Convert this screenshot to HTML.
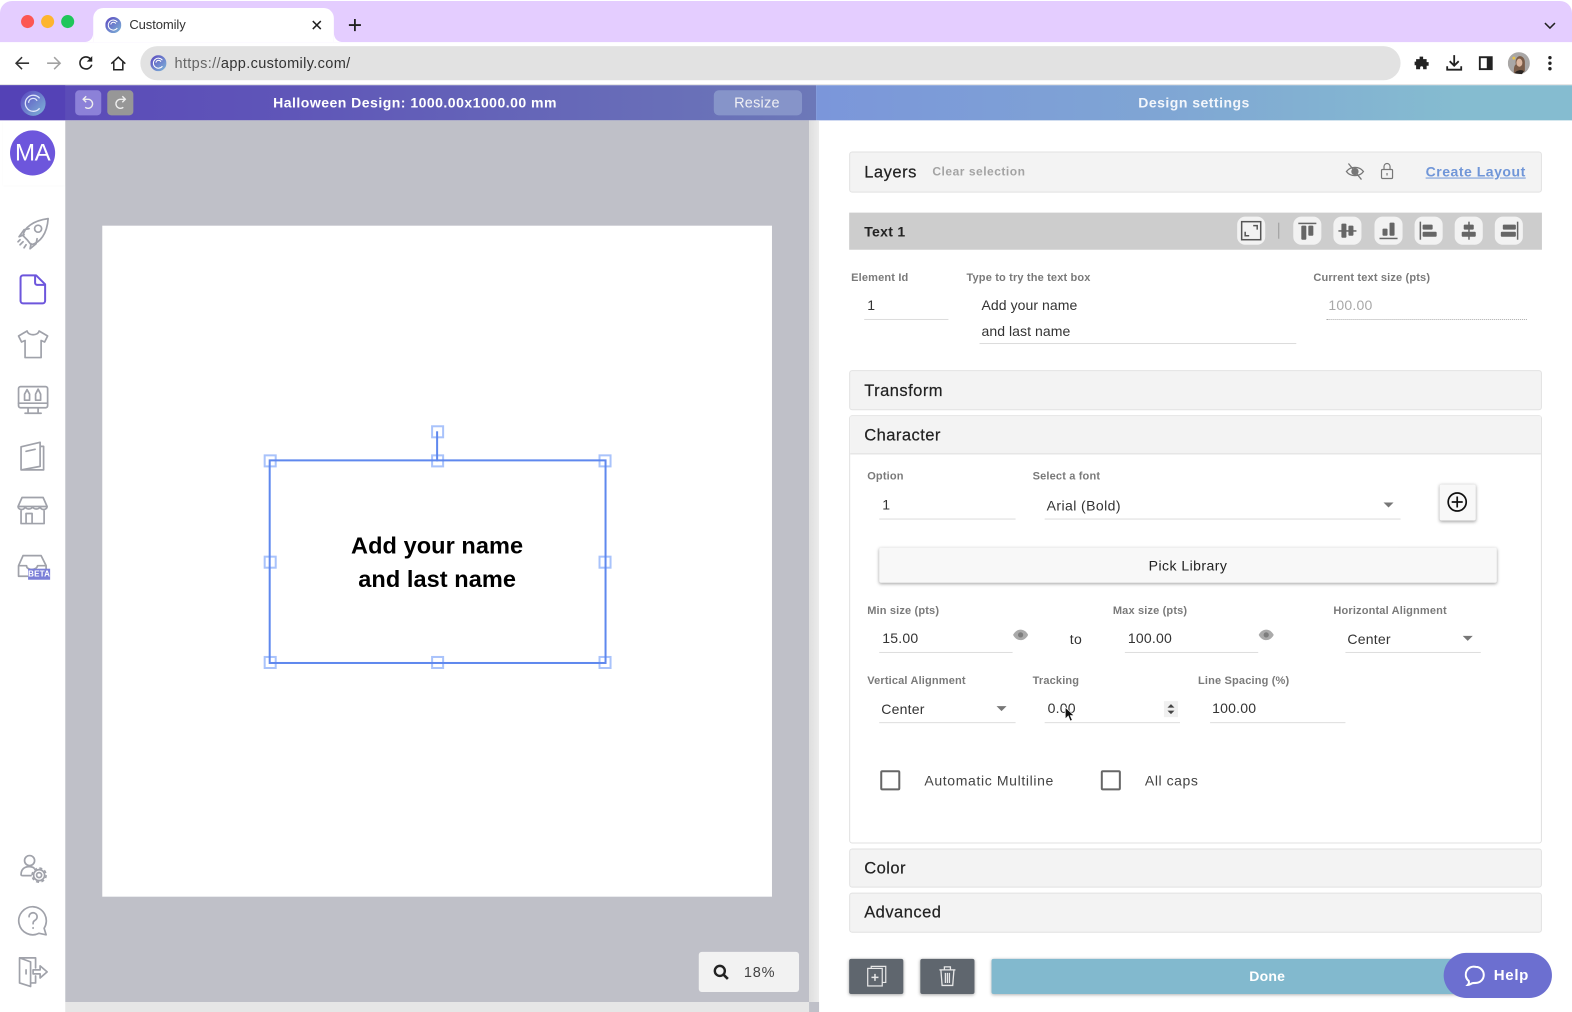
<!DOCTYPE html>
<html lang="en"><head><meta charset="utf-8"><title>Customily</title>
<style>
html,body{margin:0;padding:0;width:1572px;height:1012px;overflow:hidden;background:#fff}
#w{position:absolute;left:0;top:0;width:1568px;height:1009px;transform-origin:0 0;transform:scale(1.00255,1.003);font-family:"Liberation Sans",sans-serif;overflow:hidden;color:#333}
#w div,#w svg{position:absolute}
.t{position:absolute;white-space:nowrap;line-height:20px;font-size:14px;letter-spacing:.2px;color:#333}
.l{position:absolute;white-space:nowrap;line-height:14px;font-size:11px;font-weight:bold;letter-spacing:.15px;color:#7a7a7a;margin-top:1px}
.u{height:1px;background:#dcdcdc}
.s{left:847px;width:689px;background:#f3f3f3;border:1px solid #e2e2e2;border-radius:3px}
.h{position:absolute;white-space:nowrap;left:862px;font-size:16.5px;line-height:20px;letter-spacing:.45px;color:#222;margin-top:1px;-webkit-text-stroke:.2px #222}
.b{width:28px;height:28px;top:216px;background:#f2f2f2;border-radius:8px}
.g{fill:none;stroke:#a0a2aa;stroke-width:1.700;stroke-linejoin:round;stroke-linecap:round}
.hd{width:9px;height:9px;border:2px solid #a9c3fb}
.c{width:0;height:0;border-left:5px solid transparent;border-right:5px solid transparent;border-top:5px solid #777}
</style></head><body><div id="w">
<!-- tab strip -->
<div style="left:0;top:1px;width:1568px;height:41px;background:#e4cdff;border-radius:12px 12px 0 0"></div>
<div style="left:21px;top:15px;width:13px;height:13px;border-radius:50%;background:#fc5753"></div>
<div style="left:41px;top:15px;width:13px;height:13px;border-radius:50%;background:#fdb52e"></div>
<div style="left:61px;top:15px;width:13px;height:13px;border-radius:50%;background:#1fc65a"></div>
<div style="left:93px;top:8px;width:240px;height:34px;background:#fff;border-radius:10px 10px 0 0"></div>
<svg style="left:83px;top:32px" width="260" height="10"><path d="M0 10h10V0C10 7 6 10 0 10zM260 10h-10V0c0 7 4 10 10 10z" fill="#fff"/></svg>
<svg style="left:105px;top:17px" width="16" height="16" viewBox="0 0 16 16"><defs><linearGradient id="f" x1="0" y1="0" x2="1" y2="1"><stop offset="0" stop-color="#5a46c0"/><stop offset="1" stop-color="#7fb8d8"/></linearGradient></defs><circle cx="8" cy="8" r="8" fill="url(#f)"/><path d="M12 5a5 5 0 1 0 0 6M10.500 6.500a2.700 2.700 0 0 0-5 1" fill="none" stroke="#fff" stroke-width="1"/></svg>
<div class="t" style="left:129px;top:15px;font-size:13px;letter-spacing:-.1px;color:#333">Customily</div>
<svg style="left:310px;top:19px" width="12" height="12"><path d="M2 2l8 8M10 2l-8 8" stroke="#222" stroke-width="1.500"/></svg>
<svg style="left:347px;top:18px" width="14" height="14"><path d="M7 1v12M1 7h12" stroke="#222" stroke-width="1.800"/></svg>
<svg style="left:1539px;top:21px" width="14" height="9"><path d="M2 2l5 5 5-5" stroke="#222" stroke-width="1.500" fill="none"/></svg>
<!-- toolbar -->
<div style="left:0;top:84px;width:1568px;height:1px;background:#dedede"></div>
<svg style="left:14px;top:55px" width="16" height="16"><path d="M15 8H2M8 2L2 8l6 6" stroke="#333" stroke-width="1.500" fill="none"/></svg>
<svg style="left:46px;top:55px" width="16" height="16"><path d="M1 8h13M8 2l6 6-6 6" stroke="#a2a2a2" stroke-width="1.500" fill="none"/></svg>
<svg style="left:78px;top:55px" width="16" height="16"><path d="M13.500 9.500A6 6 0 1 1 12 3.500" stroke="#222" stroke-width="1.600" fill="none"/><path d="M14 1v5.500H8.500z" fill="#222"/></svg>
<svg style="left:110px;top:55px" width="16" height="16"><path d="M1 8.500L8 2l7 6.500M3.500 7v7.500h9V7" stroke="#222" stroke-width="1.500" fill="none"/></svg>
<div style="left:140px;top:46px;width:1257px;height:34px;border-radius:17px;background:#e2e2e2"></div>
<svg style="left:150px;top:55px" width="16" height="16" viewBox="0 0 16 16"><circle cx="8" cy="8" r="8" fill="url(#f)"/><path d="M12 5a5 5 0 1 0 0 6M10.500 6.500a2.700 2.700 0 0 0-5 1" fill="none" stroke="#fff" stroke-width="1"/></svg>
<div class="t" style="left:174px;top:54px;font-size:14.500px;letter-spacing:.35px;color:#333"><span style="color:#666">https://</span>app.customily.com/</div>
<svg style="left:1410px;top:55px" width="16" height="16" viewBox="0 0 16 16"><path d="M6 1.500h3.500v2.500H13v3h2v3.500h-2v3.500H9.500v-1.500a1.500 1.500 0 0 0-3 0v1.500H2.500v-4H1V6.500h1.500V4H6z" fill="#222"/></svg>
<svg style="left:1442px;top:54px" width="17" height="17"><path d="M8.500 1v10M4 7l4.500 4.500L13 7" stroke="#222" stroke-width="1.800" fill="none"/><path d="M1.500 12v3.500h14V12" stroke="#222" stroke-width="1.800" fill="none"/></svg>
<svg style="left:1475px;top:56px" width="14" height="14"><rect x="1" y="1" width="12" height="12" fill="none" stroke="#222" stroke-width="2"/><rect x="8" y="1" width="5" height="12" fill="#222"/></svg>
<svg style="left:1504px;top:52px" width="22" height="22" viewBox="0 0 22 22"><circle cx="11" cy="11" r="11" fill="#a9a7a6"/><path d="M6 21c0-5 0-7 2-9-1-4 1-8 4-8s5 3 5 6l0 9-3 2z" fill="#7a5c48"/><ellipse cx="11.500" cy="10.500" rx="3" ry="4" fill="#dcb69e"/><path d="M7 21c1-3 7-4 9-2l-2 3z" fill="#2a2522"/><circle cx="6" cy="6" r="1.500" fill="#e6c24a"/></svg>
<svg style="left:1543px;top:55px" width="6" height="16"><circle cx="3" cy="2.500" r="1.700" fill="#222"/><circle cx="3" cy="8" r="1.700" fill="#222"/><circle cx="3" cy="13.500" r="1.700" fill="#222"/></svg>
<!-- app header -->
<div style="left:0;top:85px;width:814px;height:35px;background:linear-gradient(90deg,#5a49b8 0,#5e53b8 30%,#6c78b8 100%)"></div>
<div style="left:814px;top:85px;width:754px;height:35px;background:linear-gradient(90deg,#7b96da 0,#7fa5d4 45%,#85bcd0 85%,#85bcd0 100%)"></div>
<div style="left:0;top:85px;width:65px;height:35px;background:#5442b6"></div>
<svg style="left:20px;top:90px" width="26" height="26" viewBox="0 0 26 26"><defs><linearGradient id="f2" x1="0" y1="0" x2="1" y2="1"><stop offset="0" stop-color="#5a46c0"/><stop offset="1" stop-color="#7fb8d8"/></linearGradient></defs><circle cx="13" cy="13" r="12.500" fill="url(#f2)"/><path d="M19.500 8a8 8 0 1 0 0 10M17 10.500a4.500 4.500 0 0 0-8.500 2" fill="none" stroke="#dfe6fa" stroke-width="1.300"/></svg>
<div style="left:75px;top:90px;width:26px;height:25px;border-radius:4px;background:#8c81d8"></div>
<div style="left:107px;top:90px;width:26px;height:25px;border-radius:4px;background:#979797"></div>
<svg style="left:81px;top:95px" width="14" height="15"><path d="M5 1L2 4l3 3M2 4h5a4.500 4.500 0 1 1-3 8" stroke="#eee" stroke-width="1.400" fill="none"/></svg>
<svg style="left:113px;top:95px" width="14" height="15"><path d="M9 1l3 3-3 3M12 4H7a4.500 4.500 0 1 0 3 8" stroke="#eee" stroke-width="1.400" fill="none"/></svg>
<div class="t" style="left:214px;width:400px;text-align:center;top:92px;font-weight:bold;letter-spacing:.47px;color:#fff;font-size:14px">Halloween Design: 1000.00x1000.00 mm</div>
<div style="left:712px;top:90px;width:88px;height:25px;border-radius:5px;background:#8694c9"></div>
<div class="t" style="left:712px;width:86px;text-align:center;top:93px;font-size:14.500px;letter-spacing:.2px;color:#f0f0f4">Resize</div>
<div class="t" style="left:991px;width:400px;text-align:center;top:92px;font-weight:bold;letter-spacing:.47px;color:#f2f6fb">Design settings</div>
<!-- canvas -->
<div style="left:65px;top:120px;width:742px;height:879px;background:#bfc0c8"></div>
<div style="left:807px;top:120px;width:10px;height:879px;background:linear-gradient(90deg,#dedede,#ececec)"></div>
<div style="left:65px;top:999px;width:742px;height:10px;background:#e6e6e6"></div>
<div style="left:807px;top:999px;width:10px;height:10px;background:#bfc0c8"></div>
<div style="left:102px;top:225px;width:668px;height:669px;background:#fff"></div>
<div class="hd" style="left:429.500px;top:423.500px"></div>
<div class="hd" style="left:262.500px;top:453px"></div><div class="hd" style="left:429.500px;top:453px"></div><div class="hd" style="left:596.500px;top:453px"></div>
<div class="hd" style="left:262.500px;top:553.500px"></div><div class="hd" style="left:596.500px;top:553.500px"></div>
<div class="hd" style="left:262.500px;top:653.500px"></div><div class="hd" style="left:429.500px;top:653.500px"></div><div class="hd" style="left:596.500px;top:653.500px"></div>
<div style="left:268px;top:458px;width:333px;height:200px;border:2px solid #5f88ee"></div>
<div style="left:435px;top:430px;width:2px;height:30px;background:#5f88ee"></div>
<div class="t" style="left:269px;width:334px;text-align:center;top:527.500px;font-size:23.500px;line-height:33px;font-weight:bold;letter-spacing:.05px;color:#000;white-space:normal">Add your name<br>and last name</div>
<div style="left:697px;top:949px;width:100px;height:40px;background:#f2f2f2;border-radius:3px"></div>
<svg style="left:711px;top:961px" width="17" height="17"><circle cx="7" cy="7" r="5" fill="none" stroke="#222" stroke-width="2.400"/><path d="M10.500 10.500L15 15" stroke="#222" stroke-width="2.600"/></svg>
<div class="t" style="left:742px;top:960px;font-size:14.500px;letter-spacing:.8px;color:#444">18%</div>
<!-- sidebar -->
<div style="left:0;top:120px;width:65px;height:889px;background:#fff"></div>
<div style="left:3px;top:120px;width:62px;height:65px;box-shadow:0 1px 2px rgba(0,0,0,.03)"></div>
<div style="left:10px;top:130px;width:45px;height:45px;border-radius:50%;background:#6d56dc;color:#fff;font-size:24px;line-height:45px;text-align:center;letter-spacing:-.5px">MA</div>
<svg style="left:15px;top:215px" width="36" height="36" viewBox="0 0 36 36" class="g"><path d="M12 24l-4-4C9 12 18 5 33 3c-1 15-8 24-17 26l-4-5z"/><circle cx="23" cy="13" r="3.500"/><path d="M9 19l-5 2 5-7 5-1M16 28l-1 5 6-5 1-5M8 26l-3 3M11 29l-2 3M5 24l-2 2"/></svg>
<svg style="left:19px;top:273px" width="28" height="31" viewBox="0 0 28 31" fill="none" stroke="#6d56dc" stroke-width="2"><path d="M4 1.500h13l9 9V27a2.500 2.500 0 0 1-2.500 2.500H4A2.500 2.500 0 0 1 1.500 27V4A2.500 2.500 0 0 1 4 1.500z" stroke-linejoin="round"/><path d="M16 1.500V9a2 2 0 0 0 2 2h8"/></svg>
<svg style="left:17px;top:328px" width="32" height="30" viewBox="0 0 32 30" class="g"><path d="M10 2L1.500 7l3 6 3.500-1.500V28.500h16V11.500L27.500 13l3-6L22 2c-1 5-11 5-12 0z"/></svg>
<svg style="left:17px;top:384px" width="32" height="30" viewBox="0 0 32 30" class="g"><rect x="1.500" y="1.500" width="29" height="21" rx="2"/><path d="M1.500 18h29M11 23v4M21 23v4M8 28h16M7.500 15V9l2.500-4.500L12.500 9v6zM18.500 15V9L21 4l2.500 5v6z"/></svg>
<svg style="left:19px;top:439px" width="27" height="31" viewBox="0 0 27 31" class="g"><path d="M2 6.500L21 2v24L2 29.500zM21 6h3.500v23.500H2M7 11l9-2"/></svg>
<svg style="left:17px;top:494px" width="31" height="30" viewBox="0 0 31 30" class="g"><path d="M5 2h21l4 9H1zM1 11a3.500 3 0 0 0 7 0 3.800 3 0 0 0 7.500 0 3.800 3 0 0 0 7.500 0 3.500 3 0 0 0 7 0M4 14v14h23V14M9 28v-10h6v10"/></svg>
<svg style="left:17px;top:552px" width="34" height="28" viewBox="0 0 34 28" class="g"><path d="M6 2h18l5 10v6M1.500 12L6 2M1.500 12v10.500h9M1.500 12h8c0 5 10 5 11 0h8.500"/></svg>
<div style="left:28px;top:567px;width:22px;height:11px;background:#7b7fd8;color:#fff;font-size:8px;font-weight:bold;line-height:11px;text-align:center;letter-spacing:.2px">BETA</div>
<svg style="left:19px;top:851px" width="30" height="30" viewBox="0 0 30 30" class="g"><circle cx="10.500" cy="7" r="5"/><path d="M2 21c0-5 3-8 8-8 2 0 4 .5 5 1.500M2 21c0 1 1 1 2 1h8"/><circle cx="20" cy="21.500" r="2.500"/><circle cx="20" cy="21.500" r="5.500"/><circle cx="20" cy="21.500" r="7" stroke-dasharray="3 2.500" stroke-linecap="butt" stroke-width="1.600"/></svg>
<svg style="left:17px;top:902px" width="32" height="32" viewBox="0 0 32 32" class="g"><path d="M16 2a14 14 0 1 0 6 26.500l7 1.500-2-6.500A14 14 0 0 0 16 2z"/><path d="M12 12a4 4 0 1 1 6 3.500c-1.500 1-2 1.500-2 3.500M16 23v.5"/></svg>
<svg style="left:18px;top:953px" width="31" height="32" viewBox="0 0 31 32" class="g"><path d="M1.500 2v25l11 3.500V6zM1.500 2h16v10M17.500 20v7h-5M8 14v4M15 14h7v-4l7 6-7 6v-4h-7z"/></svg>
<!-- panel: layers -->
<div class="s" style="top:151px;height:39px"></div>
<div class="h" style="top:160.500px;letter-spacing:.5px">Layers</div>
<div class="t" style="left:930px;top:161px;font-size:12px;font-weight:bold;letter-spacing:.5px;color:#a3a3a3">Clear selection</div>
<svg style="left:1342px;top:162px" width="19" height="18" viewBox="0 0 19 18" fill="none" stroke="#777" stroke-width="1.300"><path d="M1 9c4-5.500 13-5.500 17 0-4 5.500-13 5.500-17 0z"/><circle cx="9.500" cy="9" r="3" fill="#777"/><path d="M3 1l13 16"/></svg>
<svg style="left:1377px;top:162px" width="13" height="17" viewBox="0 0 13 17" fill="none" stroke="#777" stroke-width="1.200"><rect x="1" y="7" width="11" height="9" rx="1"/><path d="M3.500 7V4a3 3 0 0 1 6 0v3M6.500 10.500v2.500"/></svg>
<div class="t" style="left:1422px;top:161px;font-weight:bold;letter-spacing:.5px;color:#7096d8;text-decoration:underline">Create Layout</div>
<!-- panel: Text 1 -->
<div style="left:847px;top:212px;width:691px;height:37px;background:#cdcdcd"></div>
<div class="t" style="left:862px;top:221px;font-weight:bold;color:#222;letter-spacing:.3px">Text 1</div>
<div class="b" style="left:1234px"></div><div class="b" style="left:1290px"></div><div class="b" style="left:1330px"></div><div class="b" style="left:1371px"></div><div class="b" style="left:1411px"></div><div class="b" style="left:1451px"></div><div class="b" style="left:1491px"></div>
<div style="left:1275px;top:222px;width:1px;height:16px;background:#999"></div>
<svg style="left:1234px;top:216px" width="28" height="28" fill="none" stroke="#555" stroke-width="1.500"><rect x="4.500" y="5" width="19" height="18"/><path d="M16 9h4v4M8 15v4h4"/></svg>
<svg style="left:1290px;top:216px" width="28" height="28" fill="#666"><rect x="5" y="6" width="18" height="1.500"/><rect x="8" y="9" width="5" height="14" rx="1"/><rect x="15" y="9" width="5" height="10" rx="1"/></svg>
<svg style="left:1330px;top:216px" width="28" height="28" fill="#666"><rect x="5" y="13.500" width="18" height="1.500"/><rect x="8" y="7" width="5" height="14" rx="1"/><rect x="15" y="9" width="5" height="10" rx="1"/></svg>
<svg style="left:1371px;top:216px" width="28" height="28" fill="#666"><rect x="5" y="21" width="18" height="1.500"/><rect x="8" y="12" width="5" height="7" rx="1"/><rect x="15" y="6" width="5" height="13" rx="1"/></svg>
<svg style="left:1411px;top:216px" width="28" height="28" fill="#666"><rect x="5" y="5" width="1.500" height="18"/><rect x="8" y="8" width="10" height="5" rx="1"/><rect x="8" y="15" width="14" height="5" rx="1"/></svg>
<svg style="left:1451px;top:216px" width="28" height="28" fill="#666"><rect x="13.500" y="5" width="1.500" height="18"/><rect x="9" y="8" width="10" height="5" rx="1"/><rect x="7" y="15" width="14" height="5" rx="1"/></svg>
<svg style="left:1491px;top:216px" width="28" height="28" fill="#666"><rect x="22" y="5" width="1.500" height="18"/><rect x="8" y="8" width="13" height="5" rx="1" /><rect x="6" y="15" width="15" height="5" rx="1"/></svg>
<!-- element fields -->
<div class="l" style="left:849px;top:269px">Element Id</div>
<div class="l" style="left:964px;top:269px">Type to try the text box</div>
<div class="l" style="left:1310px;top:269px">Current text size (pts)</div>
<div class="t" style="left:865px;top:294px">1</div><div class="u" style="left:862px;top:318px;width:84px"></div>
<div class="t" style="left:979px;top:294px;letter-spacing:.05px">Add your name</div>
<div class="t" style="left:979px;top:320px;letter-spacing:.05px">and last name</div>
<div class="u" style="left:977px;top:342px;width:316px"></div>
<div class="t" style="left:1325px;top:294px;color:#a8a8a8">100.00</div>
<div style="left:1323px;top:318px;width:200px;height:0;border-top:1px dotted #aaa"></div>
<!-- accordions -->
<div class="s" style="top:369px;height:38px"></div><div class="h" style="top:378.500px">Transform</div>
<div style="left:847px;top:414px;width:689px;height:425px;border:1px solid #e0e0e0;border-radius:3px;background:#fff"></div>
<div style="left:848px;top:415px;width:689px;height:37px;background:#f3f3f3;border-bottom:1px solid #e0e0e0"></div>
<div class="h" style="top:422.500px">Character</div>
<div class="s" style="top:846px;height:37px"></div><div class="h" style="top:854.500px">Color</div>
<div class="s" style="top:890px;height:38px"></div><div class="h" style="top:898.500px">Advanced</div>
<!-- character -->
<div class="l" style="left:865px;top:467px">Option</div>
<div class="l" style="left:1030px;top:467px">Select a font</div>
<div class="t" style="left:880px;top:493px">1</div><div class="u" style="left:877px;top:517px;width:136px"></div>
<div class="t" style="left:1044px;top:494px;letter-spacing:.4px">Arial (Bold)</div><div class="u" style="left:1042px;top:517px;width:355px"></div>
<div class="c" style="left:1380px;top:501px"></div>
<div style="left:1436px;top:483px;width:36px;height:36px;background:#f8f8f8;border-radius:2px;box-shadow:0 1px 3px rgba(0,0,0,.35)"></div>
<svg style="left:1443px;top:490px" width="21" height="21" fill="none" stroke="#111" stroke-width="1.700"><circle cx="10.500" cy="10.500" r="9"/><path d="M10.500 5v11M5 10.500h11"/></svg>
<div style="left:877px;top:546px;width:616px;height:35px;background:#f8f8f8;border-radius:2px;box-shadow:0 1px 3px rgba(0,0,0,.35)"></div>
<div class="t" style="left:877px;width:616px;text-align:center;top:553.500px;color:#222;letter-spacing:.45px">Pick Library</div>
<div class="l" style="left:865px;top:601px">Min size (pts)</div>
<div class="l" style="left:1110px;top:601px">Max size (pts)</div>
<div class="l" style="left:1330px;top:601px">Horizontal Alignment</div>
<div class="t" style="left:880px;top:626px">15.00</div><div class="u" style="left:877px;top:650px;width:133px"></div>
<svg style="left:1010px;top:627px" width="16" height="12"><path d="M.5 6c3.500-7 11.500-7 15 0-3.500 7-11.500 7-15 0z" fill="#aaa"/><circle cx="8" cy="6" r="2.600" fill="#7d7d7d"/></svg>
<div class="t" style="left:1067px;top:627px;letter-spacing:.4px">to</div>
<div class="t" style="left:1125px;top:626px">100.00</div><div class="u" style="left:1122px;top:650px;width:133px"></div>
<svg style="left:1255px;top:627px" width="16" height="12"><path d="M.5 6c3.500-7 11.500-7 15 0-3.500 7-11.500 7-15 0z" fill="#aaa"/><circle cx="8" cy="6" r="2.600" fill="#7d7d7d"/></svg>
<div class="t" style="left:1344px;top:627px">Center</div><div class="c" style="left:1459px;top:634px"></div><div class="u" style="left:1342px;top:650px;width:135px"></div>
<div class="l" style="left:865px;top:671px">Vertical Alignment</div>
<div class="l" style="left:1030px;top:671px">Tracking</div>
<div class="l" style="left:1195px;top:671px">Line Spacing (%)</div>
<div class="t" style="left:879px;top:697px">Center</div><div class="c" style="left:994px;top:704px"></div><div class="u" style="left:877px;top:720px;width:136px"></div>
<div class="t" style="left:1045px;top:696px">0.00</div><div class="u" style="left:1042px;top:720px;width:135px"></div>
<div style="left:1161px;top:699px;width:14px;height:16px;background:#f0f0f0"></div>
<svg style="left:1161px;top:699px" width="14" height="16"><path d="M3.500 6.500L7 3l3.500 3.500zM3.500 9.500L7 13l3.500-3.500z" fill="#444"/></svg>
<div class="t" style="left:1209px;top:696px">100.00</div><div class="u" style="left:1207px;top:720px;width:135px"></div>
<svg style="left:1061px;top:704px" width="12" height="17"><path d="M1.500 1v12l3-3 2 5 2.200-1-2-4.500H10.500z" fill="#111" stroke="#fff" stroke-width=".8"/></svg>
<div style="left:878px;top:768px;width:16px;height:16px;border:2px solid #666;border-radius:2px"></div>
<div class="t" style="left:922px;top:768px;color:#444;letter-spacing:.62px">Automatic Multiline</div>
<div style="left:1098px;top:768px;width:16px;height:16px;border:2px solid #666;border-radius:2px"></div>
<div class="t" style="left:1142px;top:768px;color:#444;letter-spacing:.55px">All caps</div>
<!-- bottom actions -->
<div style="left:847px;top:956px;width:54px;height:35px;background:#5f666e;border-radius:2px;box-shadow:0 1px 3px rgba(0,0,0,.35)"></div>
<svg style="left:863px;top:962px" width="22" height="22" fill="none" stroke="#e8e8e8" stroke-width="1.200"><path d="M6 3.500V1.500h14.500v16H17"/><rect x="2.500" y="3.500" width="14.500" height="17.500"/><path d="M9.750 9v7M6.250 12.500h7" stroke-width="1.500"/></svg>
<div style="left:918px;top:956px;width:54px;height:35px;background:#5f666e;border-radius:2px;box-shadow:0 1px 3px rgba(0,0,0,.35)"></div>
<svg style="left:935px;top:962px" width="20" height="22" fill="none" stroke="#e8e8e8" stroke-width="1.300"><path d="M2 5h16M7 5V2h6v3M3.500 5l1.200 15.500h10.600L16.500 5M8 8v10M10 8v10M12 8v10"/></svg>
<div style="left:989px;top:956px;width:520px;height:35px;background:#82b9ce;border-radius:2px;box-shadow:0 1px 3px rgba(0,0,0,.3)"></div>
<div class="t" style="left:1064px;width:400px;text-align:center;top:963px;font-weight:bold;color:#fff">Done</div>
<div style="left:1440px;top:950px;width:108px;height:45px;border-radius:23px;background:#6c6fd0"></div>
<svg style="left:1461px;top:962px" width="21" height="22" fill="none" stroke="#fff" stroke-width="2"><path d="M11 2a8 8 0 0 1 0 16c-1.500 0-3 0-4 .5-1 .5-2 1.500-4 1.500 1-1 1.500-2.500 1-4A8 8 0 0 1 11 2z"/></svg>
<div class="t" style="left:1490px;top:963px;font-weight:bold;font-size:15px;color:#fff;letter-spacing:.65px">Help</div>
</div></body></html>
